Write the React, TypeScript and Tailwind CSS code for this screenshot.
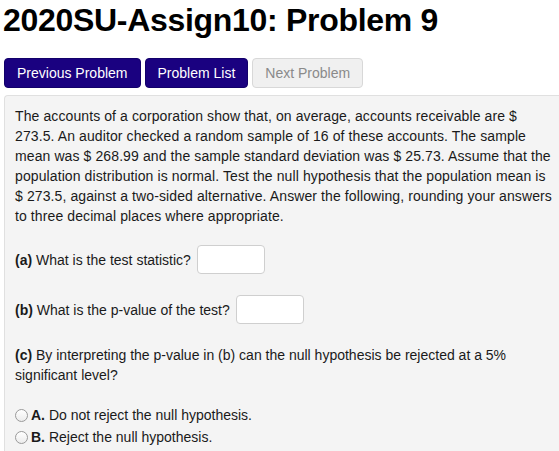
export default function App() {
  const font = { fontFamily: '"Liberation Sans", Arial, Helvetica, sans-serif' };

  return (
    <div className="w-[559px] h-[451px] overflow-hidden bg-white text-black" style={font}>
      <h1 className="pl-[3px] pt-[1px] text-[32px] font-bold leading-[38px] tracking-[-0.3px]">
        2020SU-Assign10: Problem 9
      </h1>

      {/* Navigation buttons */}
      <div className="flex gap-[4px] pl-[4px] mt-[19px]">
        <button className="h-[30px] px-[12px] rounded-[4px] bg-[#1a0180] border border-[#12006a] text-white text-[14px] leading-none">
          Previous Problem
        </button>
        <button className="h-[30px] px-[12px] rounded-[4px] bg-[#1a0180] border border-[#12006a] text-white text-[14px] leading-none">
          Problem List
        </button>
        <button className="h-[30px] px-[12px] rounded-[4px] bg-[#f0f0f0] border border-[#d8d8d8] text-[#8a8a8a] text-[14px] leading-none">
          Next Problem
        </button>
      </div>

      {/* Problem panel */}
      <div className="ml-[4px] mt-[7px] h-[400px] rounded-tl-[4px] border-t border-l border-[#e0e0e0] bg-[#f4f4f4] pl-[10px] pt-[10px] pr-[4px] text-[14px] leading-[20px] text-[#1a1a1a]">
        <p className="whitespace-nowrap tracking-[0.1px]">
          The accounts of a corporation show that, on average, accounts receivable are $<br />
          273.5. An auditor checked a random sample of 16 of these accounts. The sample<br />
          mean was $ 268.99 and the sample standard deviation was $ 25.73. Assume that the<br />
          population distribution is normal. Test the null hypothesis that the population mean is<br />
          $ 273.5, against a two-sided alternative. Answer the following, rounding your answers<br />
          to three decimal places where appropriate.
        </p>

        <div className="mt-[19px] flex items-center gap-[6px]">
          <span>
            <b>(a)</b> What is the test statistic?
          </span>
          <input className="h-[29px] w-[68px] rounded-[4px] border border-[#cfcfcf] bg-white" />
        </div>

        <div className="mt-[21px] flex items-center gap-[6px]">
          <span>
            <b>(b)</b> What is the p-value of the test?
          </span>
          <input className="h-[29px] w-[68px] rounded-[4px] border border-[#cfcfcf] bg-white" />
        </div>

        <p className="mt-[21px]">
          <b>(c)</b> By interpreting the p-value in (b) can the null hypothesis be rejected at a 5%<br />
          significant level?
        </p>

        <div className="mt-[20px] flex flex-col gap-[2px]">
          <label className="flex items-center gap-[3px]">
            <span className="w-[13px] h-[13px] rounded-full border border-[#9a9a9a] bg-gradient-to-b from-white to-[#ececec]" />
            <span>
              <b>A.</b> Do not reject the null hypothesis.
            </span>
          </label>
          <label className="flex items-center gap-[3px]">
            <span className="w-[13px] h-[13px] rounded-full border border-[#9a9a9a] bg-gradient-to-b from-white to-[#ececec]" />
            <span>
              <b>B.</b> Reject the null hypothesis.
            </span>
          </label>
        </div>
      </div>
    </div>
  );
}
